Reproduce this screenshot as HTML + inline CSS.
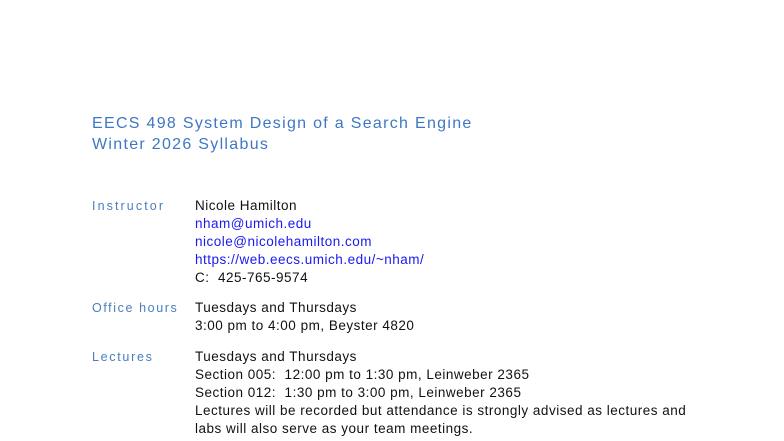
<!DOCTYPE html>
<html><head><meta charset="utf-8"><style>
body{margin:0;width:784px;height:441px;background:#fff;font-family:"Liberation Sans",sans-serif;overflow:hidden;position:relative}
div{position:absolute;white-space:nowrap}
.t{left:92px;font-size:16px;letter-spacing:1.3px;color:#3f77c4}
.l{left:92px;font-size:12.5px;color:#4a7ebf}
.b{left:195px;font-size:13.5px;color:#111;letter-spacing:0.5px}
.a{color:#1a1aee}
</style></head><body>
<div class="t" style="top:115px">EECS 498 System Design of a Search Engine</div>
<div class="t" style="top:136px">Winter 2026 Syllabus</div>

<div class="l" style="top:199px;letter-spacing:2.1px">Instructor</div>
<div class="b" style="top:198px">Nicole Hamilton</div>
<div class="b a" style="top:216px">nham@umich.edu</div>
<div class="b a" style="top:234px">nicole@nicolehamilton.com</div>
<div class="b a" style="top:252px">https://web.eecs.umich.edu/~nham/</div>
<div class="b" style="top:270px">C:&nbsp;&nbsp;425-765-9574</div>

<div class="l" style="top:301px;letter-spacing:1.6px">Office hours</div>
<div class="b" style="top:300px">Tuesdays and Thursdays</div>
<div class="b" style="top:318px">3:00 pm to 4:00 pm, Beyster 4820</div>

<div class="l" style="top:350px;letter-spacing:1.7px">Lectures</div>
<div class="b" style="top:349px">Tuesdays and Thursdays</div>
<div class="b" style="top:367px">Section 005:&nbsp;&nbsp;12:00 pm to 1:30 pm, Leinweber 2365</div>
<div class="b" style="top:385px">Section 012:&nbsp;&nbsp;1:30 pm to 3:00 pm, Leinweber 2365</div>
<div class="b" style="top:403px">Lectures will be recorded but attendance is strongly advised as lectures and</div>
<div class="b" style="top:421px">labs will also serve as your team meetings.</div>
</body></html>
